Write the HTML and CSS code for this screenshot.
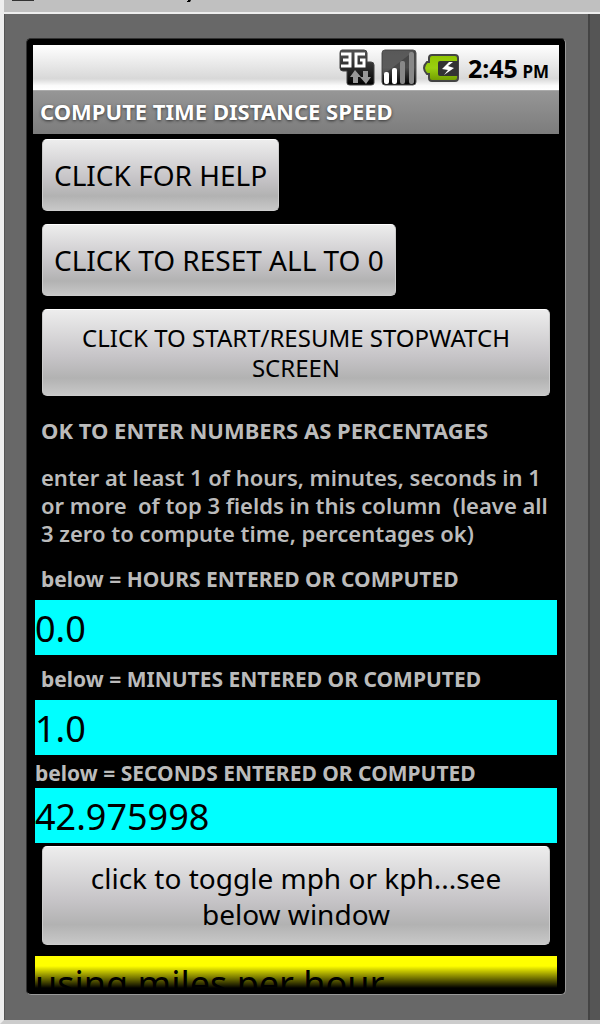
FILE: index.html
```html
<!DOCTYPE html>
<html lang="en">
<head>
    <meta charset="UTF-8">
    <meta name="viewport" content="width=device-width, initial-scale=1.0">
    <title>Compute Time Distance Speed</title>
    <link rel="stylesheet" href="styles.css">
</head>
<body>
    <div class="window">
        <div class="window-bar">
            <svg width="200" height="4" viewBox="0 0 200 4" aria-hidden="true">
                <path d="M8 0h22v1H8z" fill="#333"/>
                <path d="M184 0h3l-1 2h-3v-1h1z" fill="#000"/>
            </svg>
        </div>

        <div class="window-body">
            <div class="phone">
                <div class="screen">
                    <!-- status bar -->
                    <div class="status-bar">
                        <svg width="36" height="37" viewBox="0 0 36 37" aria-hidden="true">
                            <defs>
                                <linearGradient id="dark" x1="0" y1="0" x2="0" y2="1">
                                    <stop offset="0" stop-color="#555"/>
                                    <stop offset="1" stop-color="#000"/>
                                </linearGradient>
                            </defs>
                            <path d="M3 1h22q3 0 3 3v9h4q3 0 3 3v18q0 2-3 2H11q-3 0-3-2V22H4q-3 0-3-3V4q0-3 2-3z" fill="url(#dark)" stroke="#444"/>
                            <path d="M2 5h9v12H2M4 11h7M26 5h-9v12h8v-6h-4" fill="none" stroke="#fff" stroke-width="3"/>
                            <path d="M16 21l6 7h-3v6h-5v-6h-3zM27 35l-6-7h3v-6h5v6h3z" fill="#999"/>
                        </svg>
                        <svg width="36" height="37" viewBox="0 0 36 37" aria-hidden="true">
                            <defs>
                                <linearGradient id="panel" x1="0" y1="0" x2="0" y2="1">
                                    <stop offset="0" stop-color="#444"/>
                                    <stop offset="0.5" stop-color="#4a4a4a"/>
                                    <stop offset="1" stop-color="#000"/>
                                </linearGradient>
                            </defs>
                            <rect x="1" y="1" width="34" height="35" rx="3" fill="url(#panel)" stroke="#555"/>
                            <path d="M2 2h31L2 26z" fill="#777" opacity="0.4"/>
                            <rect x="3" y="23" width="5" height="12" rx="2" fill="#fff"/>
                            <rect x="11" y="19" width="5" height="16" rx="2" fill="#fff"/>
                            <rect x="19" y="12" width="5" height="23" rx="2" fill="#888"/>
                            <rect x="28" y="3" width="5" height="32" rx="2" fill="#888"/>
                        </svg>
                        <svg width="36" height="28" viewBox="0 0 36 28" aria-hidden="true">
                            <defs>
                                <linearGradient id="green" x1="0" y1="0" x2="0" y2="1">
                                    <stop offset="0" stop-color="#8fc400"/>
                                    <stop offset="0.5" stop-color="#9ad010"/>
                                    <stop offset="1" stop-color="#6f9a00"/>
                                </linearGradient>
                            </defs>
                            <path d="M9 1h23q3 0 3 3v20q0 3-3 3H9q-3 0-3-3v-4H4q-3-3-3-6t3-6h2V4q0-3 3-3z" fill="url(#green)" stroke="#444" stroke-width="2"/>
                            <path d="M17 7h18v15H17q-2 0-2-2V9q0-2 2-2z" fill="#333"/>
                            <path d="M26 8l-7 7 6 1-4 5 10-7-6-2 5-4z" fill="#fff"/>
                        </svg>
                        <span class="clock">2:45 <small>PM</small></span>
                    </div>

                    <h1 class="title-bar">COMPUTE TIME DISTANCE SPEED</h1>

                    <!-- main form -->
                    <form class="content">
                        <button type="button" class="btn">CLICK FOR HELP</button>
                        <button type="button" class="btn">CLICK TO RESET ALL TO 0</button>
                        <button type="button" class="btn btn-small">CLICK TO START/RESUME STOPWATCH SCREEN</button>

                        <p class="note">OK TO ENTER NUMBERS AS PERCENTAGES</p>
                        <p class="note note-help">enter at least 1 of hours, minutes, seconds in 1<br>or more&nbsp; of top 3 fields in this column&nbsp; (leave all<br>3 zero to compute time, percentages ok)</p>

                        <label class="label" for="hours">below = HOURS ENTERED OR COMPUTED</label>
                        <input class="field" type="text" id="hours" value="0.0">

                        <label class="label" for="minutes">below = MINUTES ENTERED OR COMPUTED</label>
                        <input class="field" type="text" id="minutes" value="1.0">

                        <label class="label label-tight" for="seconds">below = SECONDS ENTERED OR COMPUTED</label>
                        <input class="field" type="text" id="seconds" value="42.975998">

                        <button type="button" class="btn btn-toggle">click to toggle mph or kph...see below window</button>
                        <output class="units">using miles per hour</output>
                    </form>
                </div>
            </div>
        </div>
        <div class="window-side"></div>
    </div>
</body>
</html>
```
FILE: styles.css
```css
* {
    box-sizing: border-box;
}
body {
    margin: 0;
    background: #666;
    font-family: "Noto Sans", "Open Sans", sans-serif;
}
.window {
    display: grid;
    grid-template-columns: 1fr 12px;
    grid-template-rows: 14px 1fr;
    height: 100vh;
    border-left: 4px solid #eee;
    border-bottom: 4px solid #ccc;
}
.window-bar {
    grid-column: 1 / 3;
    background: #c0c0c0;
    border-bottom: 2px solid #eee;
}
.window-bar svg {
    display: block;
}
.window-body {
    display: flex;
    min-height: 0;
    padding: 24px 22px 25px 21px;
    background: #686868;
    border-left: 1px solid #555;
}
.window-side {
    background: #555;
    border-left: 2px solid #444;
}
.phone {
    flex: 1;
    display: flex;
    min-width: 0;
    padding: 6px;
    background: #000;
    border: 1px solid #333;
    border-right-color: #999;
    border-bottom-color: #999;
    border-radius: 5px;
}
.screen {
    flex: 1;
    position: relative;
    min-width: 0;
    overflow: hidden;
}
/* content fades out at the lower edge */
.screen::after {
    content: "";
    position: absolute;
    left: 0;
    right: 0;
    bottom: 0;
    height: 22px;
    background: linear-gradient(to bottom, transparent, #000);
}
.status-bar {
    display: flex;
    align-items: center;
    justify-content: flex-end;
    gap: 6px;
    height: 45px;
    padding-right: 10px;
    background: linear-gradient(to bottom, #fff, #d8d8d8 75%, #fafafa 90%, #fff);
}
.clock {
    margin-left: 3px;
    font-size: 25px;
    font-weight: bold;
}
.clock small {
    margin-left: -2px;
    font-size: 17px;
}
.title-bar {
    height: 44px;
    margin: 0;
    padding-left: 7px;
    background: linear-gradient(to bottom, #969696, #7c7c7c);
    border-top: 1px solid #aaa;
    color: #fff;
    font-size: 22px;
    line-height: 40px;
    text-shadow: 0 1px 3px #333;
    white-space: nowrap;
}
.content {
    display: flex;
    flex-direction: column;
    padding: 5px 2px 0;
}
.btn {
    align-self: flex-start;
    min-height: 72px;
    margin: 0 7px 13px;
    padding: 0 11px;
    border: 1px solid #ccc;
    border-top-color: #fff;
    border-radius: 5px;
    background: linear-gradient(to bottom, #ededed, #c6c4c7 55%, #b2b2b2 80%, #c8c8c8);
    color: #000;
    font-family: inherit;
    font-size: 28px;
}
.btn-small {
    align-self: stretch;
    min-height: 87px;
    font-size: 24px;
    line-height: 30px;
}
.btn-toggle {
    align-self: stretch;
    min-height: 99px;
    margin: 3px 7px 11px;
    padding: 0 40px;
    font-size: 28px;
    line-height: 36px;
}
.note,
.label {
    margin: 0 6px;
    color: #bbb;
    font-size: 21px;
    font-weight: bold;
    line-height: 28px;
    white-space: nowrap;
}
.note {
    margin-top: 7px;
    font-size: 22px;
}
.note-help {
    margin: 19px 6px 18px;
    font-weight: 600;
}
.label {
    margin-bottom: 7px;
}
.field + .label {
    margin-top: 10px;
}
.field + .label-tight {
    margin: 4px 0 1px;
}
.field {
    width: 100%;
    height: 55px;
    padding: 2px 0 0;
    border: 0;
    background: #0ff;
    color: #000;
    font-family: inherit;
    font-size: 36px;
}
.units {
    height: 56px;
    background: #ff0;
    font-size: 36px;
    line-height: 56px;
    white-space: nowrap;
}
```
